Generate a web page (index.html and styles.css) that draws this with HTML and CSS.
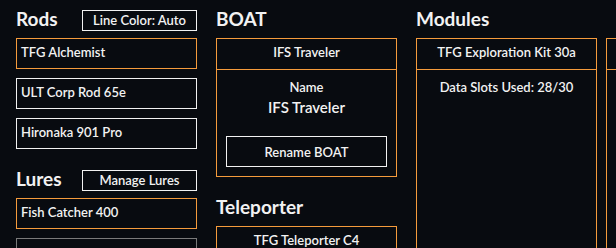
FILE: index.html
```
<!DOCTYPE html>
<html lang="en">
<head>
    <meta charset="UTF-8">
    <meta name="viewport" content="width=device-width, initial-scale=1.0">
    <title>Loadout</title>
    <link rel="stylesheet" href="styles.css">
</head>
<body>
    <div class="layout">
        <div class="column">
            <div class="section">
                <div class="section-head">
                    <h2>Rods</h2>
                    <button class="head-btn">Line Color: Auto</button>
                </div>
                <div class="item selected">TFG Alchemist</div>
                <div class="item">ULT Corp Rod 65e</div>
                <div class="item">Hironaka 901 Pro</div>
            </div>
            <div class="section">
                <div class="section-head">
                    <h2>Lures</h2>
                    <button class="head-btn">Manage Lures</button>
                </div>
                <div class="item selected">Fish Catcher 400</div>
                <div class="item empty"></div>
            </div>
        </div>

        <div class="column">
            <div class="section">
                <div class="section-head">
                    <h2>BOAT</h2>
                </div>
                <div class="card">
                    <div class="card-title">IFS Traveler</div>
                    <div class="card-body">
                        <div class="label">Name</div>
                        <div class="value">IFS Traveler</div>
                        <button class="card-btn">Rename BOAT</button>
                    </div>
                </div>
            </div>
            <div class="section">
                <div class="section-head">
                    <h2>Teleporter</h2>
                </div>
                <div class="card">
                    <div class="card-title">TFG Teleporter C4</div>
                    <div class="card-body"></div>
                </div>
            </div>
        </div>

        <div class="column wide">
            <div class="section">
                <div class="section-head">
                    <h2>Modules</h2>
                </div>
                <div class="modules">
                    <div class="card module">
                        <div class="card-title">TFG Exploration Kit 30a</div>
                        <div class="card-body">
                            <div class="label">Data Slots Used: 28/30</div>
                        </div>
                    </div>
                    <div class="card module">
                        <div class="card-title"></div>
                        <div class="card-body"></div>
                    </div>
                </div>
            </div>
        </div>
    </div>
</body>
</html>
```

FILE: styles.css
```
body {
    margin: 0;
    padding: 10px 0 0 16px;
    background: #080b10;
    color: #f2f2f2;
    font-family: Lato, "Noto Sans", sans-serif;
    font-weight: 600;
    overflow: hidden;
}
.layout {
    display: flex;
    gap: 19px;
    width: 1200px;
}
.column {
    width: 181px;
    flex-shrink: 0;
    display: flex;
    flex-direction: column;
    gap: 21px;
}
.column.wide {
    width: auto;
}
.section {
    display: flex;
    flex-direction: column;
}
.section-head {
    display: flex;
    justify-content: space-between;
    align-items: center;
    height: 21px;
    margin-bottom: 7px;
}
h2 {
    margin: 0 0 4px;
    font-size: 19px;
    font-weight: 700;
    line-height: 21px;
}
.head-btn {
    width: 115px;
    height: 21px;
    background: transparent;
    color: #f2f2f2;
    border: 1px solid #f2f2f2;
    font-family: inherit;
    font-weight: 600;
    font-size: 13px;
    line-height: 19px;
    padding: 0;
}
.item {
    box-sizing: border-box;
    height: 31px;
    border: 1px solid #f2f2f2;
    padding: 0 4px;
    margin-bottom: 9px;
    font-size: 13px;
    line-height: 27px;
}
.item:last-child {
    margin-bottom: 0;
}
.item.selected {
    border-color: #f59b3c;
}
.item.empty {
    border-color: #7a7a7a;
    height: 40px;
}
.card {
    width: 181px;
    box-sizing: border-box;
    border: 1px solid #f59b3c;
    text-align: center;
}
.card-title {
    height: 30px;
    border-bottom: 1px solid #f59b3c;
    font-size: 13px;
    line-height: 27px;
}
.card-body {
    padding: 9px;
    min-height: 20px;
}
.label {
    font-size: 13px;
    line-height: 16px;
}
.value {
    margin-top: 2px;
    font-size: 15px;
    line-height: 20px;
}
.card-btn {
    display: block;
    width: 100%;
    height: 31px;
    margin-top: 19px;
    background: transparent;
    color: #f2f2f2;
    border: 1px solid #f2f2f2;
    font-family: inherit;
    font-weight: 600;
    font-size: 13px;
}
.modules {
    display: flex;
    gap: 9px;
}
.module {
    flex-shrink: 0;
    height: 320px;
}
```
